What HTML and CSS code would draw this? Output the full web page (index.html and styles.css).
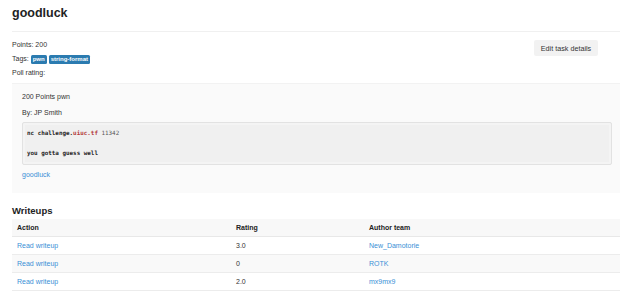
FILE: index.html
```html
<!DOCTYPE html>
<html>
<head>
<meta charset="utf-8">
<link rel="stylesheet" href="styles.css">
</head>
<body>
<div class="page">
  <header class="title-bar">
    <h1 class="title">goodluck</h1>
  </header>
  <section class="info">
    <div class="info-left">
      <div class="line">Points: 200</div>
      <div class="line">Tags: <span class="badge">pwn</span> <span class="badge">string-format</span></div>
      <div class="line">Poll rating:</div>
    </div>
    <div class="info-right">
      <button class="btn">Edit task details</button>
    </div>
  </section>
  <section class="panel">
    <div class="line">200 Points pwn</div>
    <div class="line by">By: JP Smith</div>
    <pre class="code"><b>nc challenge.</b><b class="red">uiuc.tf</b> <span class="num">11342</span>

<b>you gotta guess well</b></pre>
    <div class="line link-line"><a class="link" href="#">goodluck</a></div>
  </section>
  <h2 class="section-title">Writeups</h2>
  <table class="table">
    <thead>
      <tr><th class="c-action">Action</th><th class="c-rating">Rating</th><th>Author team</th></tr>
    </thead>
    <tbody>
      <tr><td><a class="link" href="#">Read writeup</a></td><td>3.0</td><td><a class="link" href="#">New_Damotorie</a></td></tr>
      <tr class="alt"><td><a class="link" href="#">Read writeup</a></td><td>0</td><td><a class="link" href="#">ROTK</a></td></tr>
      <tr><td><a class="link" href="#">Read writeup</a></td><td>2.0</td><td><a class="link" href="#">mx9mx9</a></td></tr>
    </tbody>
  </table>
</div>
</body>
</html>
```
FILE: styles.css
```css
html, body {
  margin: 0;
  padding: 0;
  overflow: hidden;
  background: #fff;
}
body {
  font-family: "Liberation Sans", Arial, sans-serif;
  font-size: 7px;
  color: #333;
}
.page {
  padding-left: 12px;
}
.title-bar {
  padding-top: 6px;
  padding-bottom: 10px;
  border-bottom: 1px solid #f0f0f0;
}
.title {
  margin: 0;
  font-size: 12.5px;
  line-height: 15px;
  font-weight: bold;
  color: #222;
}
.info {
  display: flex;
  justify-content: space-between;
  padding-top: 6px;
}
.line {
  line-height: 14px;
}
.badge {
  display: inline-block;
  background: #2b7bb0;
  color: #fff;
  font-weight: bold;
  font-size: 6px;
  line-height: 8.5px;
  padding: 0 2px;
  border-radius: 1.5px;
  vertical-align: 0;
}
.info-right {
  padding-top: 2px;
  padding-right: 22px;
}
.btn {
  font-family: "Liberation Sans", Arial, sans-serif;
  font-size: 7.2px;
  color: #333;
  background: #f2f2f2;
  border: 0;
  border-radius: 2px;
  width: 64px;
  height: 16px;
  padding: 0;
}
.panel {
  margin-top: 3px;
  background: #fafafa;
  border-top: 1px solid #f2f2f2;
  padding: 6px 8px 11px 10px;
}
.by {
  margin-top: 2px;
}
.code {
  margin: 2px 0 0 0;
  background: #f0f0f0;
  border: 1px solid #e2e2e2;
  box-shadow: inset 0 0 0 2px #f4f4f4;
  border-radius: 2px;
  padding: 5px 4px 6px 4px;
  font-family: "DejaVu Sans Mono", "Liberation Mono", monospace;
  font-size: 5.9px;
  line-height: 10px;
  color: #222;
}
.code b {
  font-weight: bold;
}
.code .red {
  color: #b33a3a;
}
.code .num {
  color: #555;
}
.link-line {
  margin-top: 3px;
}
.link {
  color: #3a8fd6;
  text-decoration: none;
}
.section-title {
  margin: 12px 0 2px 0;
  font-size: 9.5px;
  line-height: 12px;
  font-weight: bold;
  color: #222;
}
.table {
  width: 100%;
  border-collapse: collapse;
}
.table th, .table td {
  text-align: left;
  padding: 0 5px;
  height: 17px;
  line-height: 14px;
  font-size: 7px;
}
.table th {
  font-weight: bold;
  color: #222;
  background: #f8f8f8;
  border-bottom: 1px solid #e8e8e8;
}
.table td {
  border-bottom: 1px solid #ececec;
}
.table .alt td {
  background: #f9f9f9;
}
.c-action {
  width: 209px;
}
.c-rating {
  width: 123px;
}
```
